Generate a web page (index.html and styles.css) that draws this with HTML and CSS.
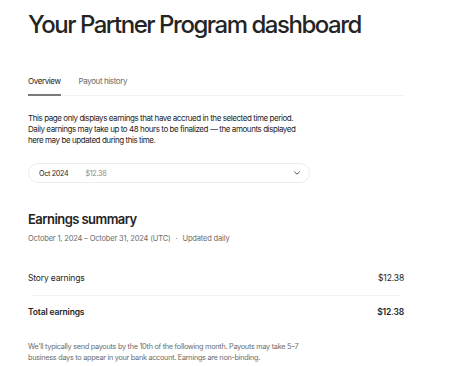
FILE: index.html
```html
<!DOCTYPE html>
<html>
<head>
<meta charset="utf-8">
<link rel="stylesheet" href="styles.css">
</head>
<body>
<main class="page">
  <h1 class="title">Your Partner Program dashboard</h1>
  <nav class="tabs">
    <div class="tab active">Overview</div>
    <div class="tab">Payout history</div>
  </nav>
  <p class="intro">This page only displays earnings that have accrued in the selected time period. Daily earnings may take up to 48 hours to be finalized — the amounts displayed here may be updated during this time.</p>
  <div class="select">
    <span class="sel-month">Oct 2024</span>
    <span class="sel-amount">$12.38</span>
    <svg class="chev" width="8" height="6" viewBox="0 0 8 6"><path d="M1.5 1.8 L4 4.2 L6.5 1.8" fill="none" stroke="#555" stroke-width="1" stroke-linecap="round" stroke-linejoin="round"/></svg>
  </div>
  <h2 class="summary">Earnings summary</h2>
  <div class="period">October 1, 2024 – October 31, 2024 (UTC)<span class="dot">·</span>Updated daily</div>
  <div class="row">
    <span>Story earnings</span>
    <span>$12.38</span>
  </div>
  <div class="rule"></div>
  <div class="row total">
    <span>Total earnings</span>
    <span>$12.38</span>
  </div>
  <p class="footnote">We'll typically send payouts by the 10th of the following month. Payouts may take <span class="nowrap">5–7</span> business days to appear in your bank account. Earnings are non-binding.</p>
</main>
</body>
</html>
```

FILE: styles.css
```css
html, body {
  margin: 0;
  padding: 0;
  background: #fff;
}
body {
  font-family: Inter, "Noto Sans", sans-serif;
  color: #242424;
}
.page {
  width: 376px;
  padding: 8px 0 0 28px;
}
.title {
  margin: 0;
  font-size: 24px;
  font-weight: 500;
  letter-spacing: -1.47px;
  line-height: 34px;
  white-space: nowrap;
}
.tabs {
  display: flex;
  gap: 18px;
  margin-top: 34px;
  border-bottom: 1px solid #f2f2f2;
}
.tab {
  font-size: 8px;
  letter-spacing: -0.4px;
  color: #6b6b6b;
  padding-bottom: 8px;
  line-height: 11px;
}
.tab.active {
  color: #242424;
  border-bottom: 2px solid #7a7a7a;
  margin-bottom: -1px;
  padding-bottom: 7px;
}
.intro {
  margin: 17px 0 0;
  width: 280px;
  font-size: 8px;
  letter-spacing: -0.43px;
  line-height: 11px;
  color: #242424;
}
.select {
  margin-top: 17px;
  width: 282px;
  height: 20px;
  box-sizing: border-box;
  border: 1px solid #ececec;
  border-radius: 10px;
  display: flex;
  align-items: center;
  padding: 0 8px 0 10px;
  font-size: 7.2px;
  letter-spacing: -0.3px;
}
.sel-month {
  color: #242424;
}
.sel-amount {
  margin-left: 17px;
  color: #8a8a8a;
}
.chev {
  margin-left: auto;
}
.summary {
  margin: 28px 0 0;
  font-size: 13px;
  font-weight: 600;
  letter-spacing: -0.55px;
  line-height: 16px;
}
.period {
  margin-top: 7px;
  font-size: 7.5px;
  letter-spacing: -0.17px;
  color: #6b6b6b;
  line-height: 10px;
}
.dot {
  margin: 0 5px;
}
.row {
  display: flex;
  justify-content: space-between;
  font-size: 8.5px;
  letter-spacing: -0.15px;
  line-height: 11px;
  margin-top: 29px;
}
.rule {
  margin: 11px 4px 0;
  height: 1px;
  background: #f2f2f2;
}
.row.total {
  margin-top: 11px;
  font-weight: 600;
}
.footnote {
  margin: 23px 0 0;
  width: 285px;
  font-size: 7.3px;
  letter-spacing: -0.28px;
  line-height: 11px;
  color: #6b6b6b;
}
.nowrap {
  white-space: nowrap;
}
```
